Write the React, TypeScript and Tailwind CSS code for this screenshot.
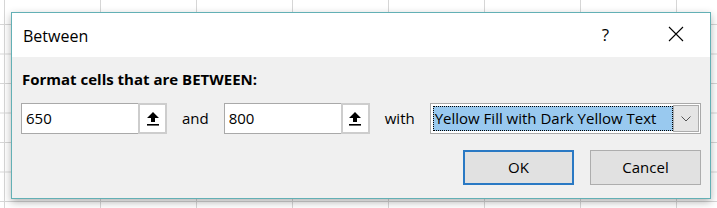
import React from 'react';

const font = { fontFamily: '"Open Sans", "Noto Sans", sans-serif' };

// collapse-dialog button next to each range box
const RefButton: React.FC = () => (
  <div className="w-[29px] h-[31px] border-2 border-[#cdcdcd] bg-white flex items-center justify-center">
    <svg width="16" height="16" viewBox="0 0 16 16">
      <path d="M8 1 L14 7 L10 7 L10 11 L6 11 L6 7 L2 7 Z" fill="#000" />
      <rect x="2" y="13" width="12" height="1.6" fill="#000" />
    </svg>
  </div>
);

const RangeInput: React.FC<{ value: string }> = ({ value }) => (
  <div className="flex">
    <div className="w-[117px] h-[31px] border border-[#a9a9a9] border-r-0 bg-white flex items-center pl-[4px] text-[15px] text-black">
      {value}
    </div>
    <RefButton />
  </div>
);

export default function App() {
  return (
    <div
      className="w-[717px] h-[208px] overflow-hidden bg-white pt-[12px] pl-[11px] bg-[linear-gradient(to_right,#d6d6d6_1px,transparent_1px),linear-gradient(to_bottom,#d6d6d6_1px,transparent_1px)] [background-size:96px_29.5px] [background-position:4px_24px]"
      style={font}
    >
      <div className="w-[700px] h-[187px] border border-[#63b0b5] bg-[#f0f0f0] shadow-[0_3px_8px_rgba(0,0,0,0.3)] flex flex-col">
        {/* Title bar */}
        <div className="h-[44px] bg-white flex items-center pl-[11px] pr-[26px] shrink-0">
          <span className="text-[16px] text-black leading-none pt-[1px]">Between</span>
          <span className="ml-auto text-[17px] text-black leading-none mr-[59px] pb-[2px]">?</span>
          <svg width="16" height="16" viewBox="0 0 16 16" className="mb-[3px]">
            <path d="M1 1 L15 15 M15 1 L1 15" stroke="#000" strokeWidth="1.1" />
          </svg>
        </div>

        {/* Body */}
        <div className="flex-1 flex flex-col px-[9px] pt-[12px]">
          <div className="text-[15px] font-bold text-black leading-[20px] pl-[1px]">
            Format cells that are BETWEEN:
          </div>

          <div className="flex items-center mt-[14px]">
            <RangeInput value="650" />
            <span className="text-[15px] text-black ml-[15px] mr-[15px] pb-[1px]">and</span>
            <RangeInput value="800" />
            <span className="text-[15px] text-black ml-[15px] mr-[15px] pb-[1px]">with</span>
            <div className="w-[271px] h-[31px] border border-[#a9a9a9] bg-white flex items-center pl-[2px] pr-[1px]">
              <div className="w-[240px] h-[25px] bg-[#99c9ef] border border-dotted border-black flex items-center pl-[1px] text-[15px] text-black whitespace-nowrap">
                Yellow Fill with Dark Yellow Text
              </div>
              <div className="ml-auto w-[26px] h-[27px] bg-[#e5e5e5] border border-[#acacac] flex items-center justify-center">
                <svg width="10" height="6" viewBox="0 0 10 6">
                  <path d="M0.5 0.5 L5 5 L9.5 0.5" fill="none" stroke="#555" strokeWidth="1" />
                </svg>
              </div>
            </div>
          </div>

          <div className="flex justify-end gap-[16px] mt-[16px]">
            <button className="w-[111px] h-[35px] bg-[#e1e1e1] border-2 border-[#2a79c4] text-[15px] text-black">
              OK
            </button>
            <button className="w-[111px] h-[35px] bg-[#e1e1e1] border border-[#adadad] text-[15px] text-black">
              Cancel
            </button>
          </div>
        </div>
      </div>
    </div>
  );
}
